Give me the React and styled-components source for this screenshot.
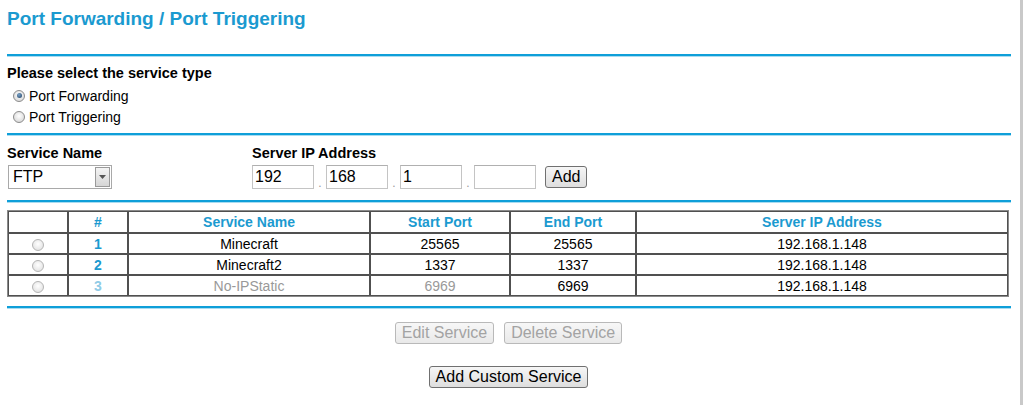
import styled, { createGlobalStyle } from 'styled-components';

const GlobalStyle = createGlobalStyle`
    body {
        margin: 0;
        background: #ffffff;
        font-family: "Liberation Sans", Arial, sans-serif;
        color: #000000;
    }
`;

const services = [
    { id: 1, name: 'Minecraft', start: '25565', end: '25565', ip: '192.168.1.148' },
    { id: 2, name: 'Minecraft2', start: '1337', end: '1337', ip: '192.168.1.148' },
    { id: 3, name: 'No-IPStatic', start: '6969', end: '6969', ip: '192.168.1.148', faded: true },
];

export default function App() {
    return (
        <>
            <GlobalStyle />
            <Frame>
                <Page>
                    <Title>Port Forwarding / Port Triggering</Title>
                    <Divider />

                    <Heading $top={8}>Please select the service type</Heading>
                    <RadioGroup>
                        <RadioRow>
                            <Radio checked />
                            <span>Port Forwarding</span>
                        </RadioRow>
                        <RadioRow>
                            <Radio />
                            <span>Port Triggering</span>
                        </RadioRow>
                    </RadioGroup>
                    <Divider $top={6} />

                    <FieldRow>
                        <Field $width={245}>
                            <Heading>Service Name</Heading>
                            <SelectBox>
                                <span>FTP</span>
                                <SelectArrow>
                                    <svg width="7" height="4" viewBox="0 0 7 4">
                                        <path d="M0 0h7L3.5 4z" fill="#555" />
                                    </svg>
                                </SelectArrow>
                            </SelectBox>
                        </Field>
                        <Field>
                            <Heading>Server IP Address</Heading>
                            <IpRow>
                                <IpInput defaultValue="192" />
                                <Dot>.</Dot>
                                <IpInput defaultValue="168" />
                                <Dot>.</Dot>
                                <IpInput defaultValue="1" />
                                <Dot>.</Dot>
                                <IpInput defaultValue="" />
                                <Button $small>Add</Button>
                            </IpRow>
                        </Field>
                    </FieldRow>
                    <Divider $top={11} />

                    <Table>
                        <colgroup>
                            <col style={{ width: 60 }} />
                            <col style={{ width: 60 }} />
                            <col style={{ width: 242 }} />
                            <col style={{ width: 140 }} />
                            <col style={{ width: 126 }} />
                            <col />
                        </colgroup>
                        <thead>
                            <tr>
                                <Th></Th>
                                <Th>#</Th>
                                <Th>Service Name</Th>
                                <Th>Start Port</Th>
                                <Th>End Port</Th>
                                <Th>Server IP Address</Th>
                            </tr>
                        </thead>
                        <tbody>
                            {services.map(s => (
                                <tr key={s.id}>
                                    <Td><Radio $dim /></Td>
                                    <Td $num $faded={s.faded}>{s.id}</Td>
                                    <Td $faded={s.faded}>{s.name}</Td>
                                    <Td $faded={s.faded}>{s.start}</Td>
                                    <Td>{s.end}</Td>
                                    <Td>{s.ip}</Td>
                                </tr>
                            ))}
                        </tbody>
                    </Table>
                    <Divider $top={9} />

                    <ButtonRow $top={14}>
                        <Button disabled>Edit Service</Button>
                        <Button disabled>Delete Service</Button>
                    </ButtonRow>
                    <ButtonRow $top={22}>
                        <Button>Add Custom Service</Button>
                    </ButtonRow>
                </Page>
                <ScrollEdge />
            </Frame>
        </>
    );
}

function Radio({ checked, $dim }) {
    return (
        <RadioCircle $dim={$dim}>
            {checked ? <RadioDot /> : null}
        </RadioCircle>
    );
}

const Frame = styled.div`
    display: flex;
    width: 1023px;
    height: 405px;
    overflow: hidden;
`;

const Page = styled.div`
    flex: 1;
    padding: 7px 9px 0 7px;
`;

const ScrollEdge = styled.div`
    width: 3px;
    background: #c9c9c9;
`;

const Title = styled.h1`
    margin: 0 0 23px 0;
    font-size: 19px;
    line-height: 24px;
    font-weight: bold;
    color: #1b9ad0;
`;

const Divider = styled.div`
    height: 2px;
    margin-top: ${props => props.$top || 0}px;
    background: #0f9fd9;
    box-shadow: 0 1px 0 #a9dcf1;
`;

const Heading = styled.div`
    margin-top: ${props => props.$top || 9}px;
    font-size: 14.5px;
    line-height: 18px;
    font-weight: bold;
`;

const RadioGroup = styled.div`
    margin-top: 3px;
`;

const RadioRow = styled.div`
    display: flex;
    align-items: center;
    gap: 4px;
    height: 21px;
    padding-left: 6px;
    font-size: 14px;
`;

const RadioCircle = styled.span`
    display: inline-flex;
    align-items: center;
    justify-content: center;
    box-sizing: border-box;
    width: 12px;
    height: 12px;
    border-radius: 50%;
    border: 1px solid ${props => props.$dim ? '#b4b4b4' : '#8c8c8c'};
    background: ${props => props.$dim
        ? 'radial-gradient(circle at 50% 40%, #ffffff, #dcdcdc)'
        : 'radial-gradient(circle at 50% 40%, #ffffff, #cfcfcf)'};
    vertical-align: middle;
`;

const RadioDot = styled.span`
    width: 5px;
    height: 5px;
    border-radius: 50%;
    background: radial-gradient(circle at 40% 35%, #7aa3c8, #1f3f62);
`;

const FieldRow = styled.div`
    display: flex;
`;

const Field = styled.div`
    width: ${props => props.$width ? `${props.$width}px` : 'auto'};
    display: flex;
    flex-direction: column;
    gap: 3px;
`;

const SelectBox = styled.div`
    display: flex;
    align-items: center;
    justify-content: space-between;
    box-sizing: border-box;
    width: 104px;
    height: 24px;
    margin-left: 1px;
    padding: 0 1px 0 4px;
    border: 1px solid #a9a9a9;
    font-size: 16px;
`;

const SelectArrow = styled.span`
    display: flex;
    align-items: center;
    justify-content: center;
    box-sizing: border-box;
    width: 15px;
    height: 20px;
    border: 1px solid #9a9a9a;
    background: linear-gradient(#f4f4f4, #d6d6d6);
`;

const IpRow = styled.div`
    display: flex;
    align-items: center;
`;

const IpInput = styled.input`
    box-sizing: border-box;
    width: 62px;
    height: 24px;
    padding: 0 2px;
    border: 1px solid #c4c4c4;
    border-top-color: #b0b0b0;
    font-family: "Liberation Sans", Arial, sans-serif;
    font-size: 16px;
    color: #000;
    outline: none;
`;

const Dot = styled.span`
    width: 12px;
    align-self: flex-end;
    text-align: center;
    font-size: 12px;
    line-height: 12px;
    color: #9a9a9a;
`;

const Button = styled.button`
    box-sizing: border-box;
    height: 22px;
    padding: 0 6px;
    margin-left: ${props => props.$small ? '9px' : '0'};
    border: 1px solid #707070;
    border-radius: 3px;
    background: linear-gradient(#f6f6f6, #dedede);
    font-family: "Liberation Sans", Arial, sans-serif;
    font-size: 16px;
    line-height: 20px;
    color: #000;

    &:disabled {
        border-color: #b9b9b9;
        color: #a3a3a3;
        background: linear-gradient(#f7f7f7, #e9e9e9);
    }
`;

const Table = styled.table`
    width: 1002px;
    margin-top: 8px;
    border-collapse: separate;
    border-spacing: 0;
    table-layout: fixed;
    border: 1px solid #8a8a8a;
    font-size: 14px;
`;

const Th = styled.th`
    height: 20px;
    padding: 0;
    border: 1px solid #505050;
    font-weight: bold;
    color: #1b9ad0;
    text-align: center;
`;

const Td = styled.td`
    height: 19px;
    padding: 0;
    border: 1px solid #505050;
    text-align: center;
    font-weight: ${props => props.$num ? 'bold' : 'normal'};
    color: ${props => props.$num
        ? (props.$faded ? '#8fcbe6' : '#1b9ad0')
        : (props.$faded ? '#999999' : '#000000')};
`;

const ButtonRow = styled.div`
    display: flex;
    justify-content: center;
    gap: 10px;
    margin-top: ${props => props.$top || 13}px;
    padding-right: 1px;
`;
